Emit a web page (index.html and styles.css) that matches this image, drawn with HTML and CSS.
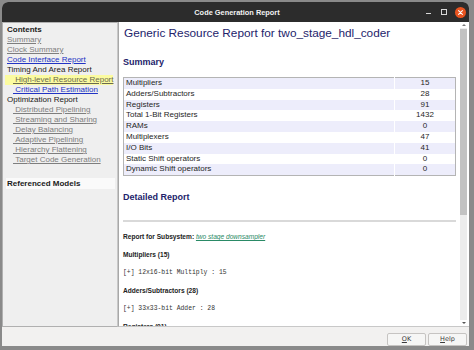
FILE: index.html
```html
<!DOCTYPE html>
<html>
<head>
<meta charset="utf-8">
<link rel="stylesheet" href="styles.css">
</head>
<body>
<div class="window">
  <div class="titlebar">
    <span class="title">Code Generation Report</span>
    <div class="controls">
      <span class="ctl"><span class="min"></span></span>
      <span class="ctl"><span class="max"></span></span>
      <span class="ctl"><span class="close"><svg width="11" height="11" viewBox="0 0 11 11"><path d="M3.6 3.6 L7.4 7.4 M7.4 3.6 L3.6 7.4" stroke="#fff" stroke-width="1.1" stroke-linecap="round"/></svg></span></span>
    </div>
  </div>
  <div class="main">
    <div class="left">
      <div class="contents">
        <div class="item head">Contents</div>
        <div class="item"><a class="lk gray">Summary</a></div>
        <div class="item"><a class="lk gray">Clock Summary</a></div>
        <div class="item"><a class="lk blue">Code Interface Report</a></div>
        <div class="item">Timing And Area Report</div>
        <div class="item sub current"><a class="lk dark">&nbsp;High-level Resource Report</a></div>
        <div class="item sub"><a class="lk blue">&nbsp;Critical Path Estimation</a></div>
        <div class="item">Optimization Report</div>
        <div class="item sub"><a class="lk gray">&nbsp;Distributed Pipelining</a></div>
        <div class="item sub"><a class="lk gray">&nbsp;Streaming and Sharing</a></div>
        <div class="item sub"><a class="lk gray">&nbsp;Delay Balancing</a></div>
        <div class="item sub"><a class="lk gray">&nbsp;Adaptive Pipelining</a></div>
        <div class="item sub"><a class="lk gray">&nbsp;Hierarchy Flattening</a></div>
        <div class="item sub"><a class="lk gray">&nbsp;Target Code Generation</a></div>
      </div>
      <div class="refs">Referenced Models</div>
    </div>
    <div class="browser">
      <div class="page">
        <div class="h1">Generic Resource Report for two_stage_hdl_coder</div>
        <div class="h2 summary">Summary</div>
        <table class="summary-table">
          <tr><td class="lbl">Multipliers</td><td class="val">15</td></tr>
          <tr><td class="lbl">Adders/Subtractors</td><td class="val">28</td></tr>
          <tr><td class="lbl">Registers</td><td class="val">91</td></tr>
          <tr><td class="lbl">Total 1-Bit Registers</td><td class="val">1432</td></tr>
          <tr><td class="lbl">RAMs</td><td class="val">0</td></tr>
          <tr><td class="lbl">Multiplexers</td><td class="val">47</td></tr>
          <tr><td class="lbl">I/O Bits</td><td class="val">41</td></tr>
          <tr><td class="lbl">Static Shift operators</td><td class="val">0</td></tr>
          <tr><td class="lbl">Dynamic Shift operators</td><td class="val">0</td></tr>
        </table>
        <div class="h2 detailed">Detailed Report</div>
        <div class="rule"></div>
        <div class="small first"><b>Report for Subsystem:</b> <a class="sublink">two stage downsampler</a></div>
        <div class="small"><b>Multipliers (15)</b></div>
        <div class="mono">[+] 12x16-bit Multiply : 15</div>
        <div class="small"><b>Adders/Subtractors (28)</b></div>
        <div class="mono">[+] 33x33-bit Adder : 28</div>
        <div class="small"><b>Registers (91)</b></div>
      </div>
      <div class="scrollbar">
        <div class="arrow up"></div>
        <div class="track"><div class="thumb"></div></div>
        <div class="arrow down"></div>
      </div>
    </div>
  </div>
  <div class="buttons">
    <button class="btn"><u>O</u>K</button>
    <button class="btn"><u>H</u>elp</button>
  </div>
</div>
</body>
</html>
```
FILE: styles.css
```css
html, body {
  margin: 0;
  padding: 0;
}
body {
  width: 474px;
  height: 350px;
  overflow: hidden;
  background: #8a8a8a;
  font-family: "Liberation Sans", Arial, sans-serif;
}
.window {
  margin: 2px 0 0 2px;
  width: 467px;
  height: 344px;
  background: #f2f1f0;
  border-radius: 6px 6px 0 0;
  overflow: hidden;
  display: flex;
  flex-direction: column;
}
.titlebar {
  flex: none;
  height: 20px;
  background: #2c2c2c;
  color: #f2f2f2;
  display: grid;
  grid-template-columns: 1fr auto 1fr;
  align-items: center;
}
.title {
  grid-column: 2;
  font-weight: bold;
  font-size: 7.4px;
  padding-left: 3px;
}
.controls {
  grid-column: 3;
  justify-self: end;
  display: flex;
  padding-right: 1px;
}
.ctl {
  width: 16px;
  height: 20px;
  display: flex;
  align-items: center;
  justify-content: center;
}
.min {
  width: 5px;
  height: 1px;
  background: #d8d8d8;
  margin-top: 2px;
}
.max {
  width: 4px;
  height: 4px;
  border: 1px solid #d8d8d8;
}
.close {
  width: 11px;
  height: 11px;
  border-radius: 50%;
  background: #e95420;
  display: flex;
}
.main {
  flex: none;
  height: 305px;
  display: flex;
}
.left {
  width: 114px;
  border: 1px solid #b0b0b0;
  border-right-color: #c8c8c8;
  background: #efefef;
  font-size: 8px;
  color: #1a1a1a;
}
.contents {
  padding: 2px 4px 0 4px;
}
.item {
  height: 10px;
  line-height: 10px;
  white-space: nowrap;
}
.item.head {
  font-weight: bold;
}
.item.sub {
  padding-left: 6px;
}
.item.current {
  background: #fbfba0;
  margin-left: -2px;
  padding-left: 8px;
}
.lk {
  text-decoration: underline;
}
.lk.gray { color: #7e7e7e; }
.lk.blue { color: #2233c4; }
.lk.dark { color: #6a6a50; }
.refs {
  margin: 13px 2px 0 3px;
  height: 11px;
  line-height: 11px;
  background: #fafafa;
  font-weight: bold;
  padding-left: 1px;
}
.browser {
  flex: 1;
  display: flex;
  background: #ffffff;
  border-left: 1px solid #a8a8a8;
  border-bottom: 1px solid #c8c8c8;
}
.page {
  flex: 1;
  overflow: hidden;
  padding-left: 4px;
  color: #222;
}
.h1 {
  margin: 4px 0 0 1px;
  font-size: 11.8px;
  line-height: 14px;
  color: #23236b;
  white-space: nowrap;
}
.h2 {
  font-size: 9px;
  line-height: 11px;
  font-weight: bold;
  color: #23236b;
}
.h2.summary {
  margin-top: 17px;
}
.summary-table {
  margin-top: 9px;
  width: 333px;
  border-collapse: collapse;
  border: 1px solid #b4b4b4;
  font-size: 8px;
  color: #262626;
}
.summary-table td {
  height: 10.8px;
  line-height: 10.8px;
  padding: 0 0 0 2px;
}
.summary-table tr:nth-child(odd) td {
  background: #ededfb;
}
.summary-table td.val {
  width: 60px;
  text-align: center;
  border-left: 1px solid #ffffff;
  padding: 0;
}
.h2.detailed {
  margin-top: 16px;
}
.rule {
  margin-top: 17px;
  width: 333px;
  height: 2px;
  background: #d9d9d9;
}
.small {
  margin-top: 10px;
  font-size: 6.6px;
  line-height: 8px;
  white-space: nowrap;
}
.small.first {
  margin-top: 11px;
}
.sublink {
  color: #2a8a66;
  text-decoration: underline;
  font-style: italic;
}
.mono {
  margin-top: 10px;
  font-family: "Liberation Mono", "Courier New", monospace;
  font-size: 6.4px;
  line-height: 8px;
  color: #333;
  white-space: pre;
}
.scrollbar {
  width: 9px;
  margin-right: 1px;
  display: flex;
  flex-direction: column;
  align-items: center;
}
.arrow {
  flex: none;
  height: 6px;
  width: 9px;
  display: flex;
  align-items: center;
  justify-content: center;
}
.arrow.up::before {
  content: "";
  border-left: 2px solid transparent;
  border-right: 2px solid transparent;
  border-bottom: 2px solid #777;
}
.arrow.down::before {
  content: "";
  border-left: 2px solid transparent;
  border-right: 2px solid transparent;
  border-top: 2px solid #555;
}
.track {
  flex: 1;
  width: 7px;
  background: #ececec;
}
.thumb {
  margin-top: 1px;
  height: 186px;
  background: #c2c2c2;
}
.buttons {
  flex: 1;
  display: flex;
  justify-content: flex-end;
  align-items: flex-start;
  gap: 2px;
  padding: 6px 2px 0 0;
}
.btn {
  width: 39px;
  height: 13px;
  padding: 0;
  margin: 0;
  border: 1px solid #c6c4c2;
  border-radius: 2px;
  background: #f6f6f5;
  font-family: "DejaVu Sans", sans-serif;
  font-size: 6.5px;
  color: #3a3a3a;
  line-height: 11px;
}
```
